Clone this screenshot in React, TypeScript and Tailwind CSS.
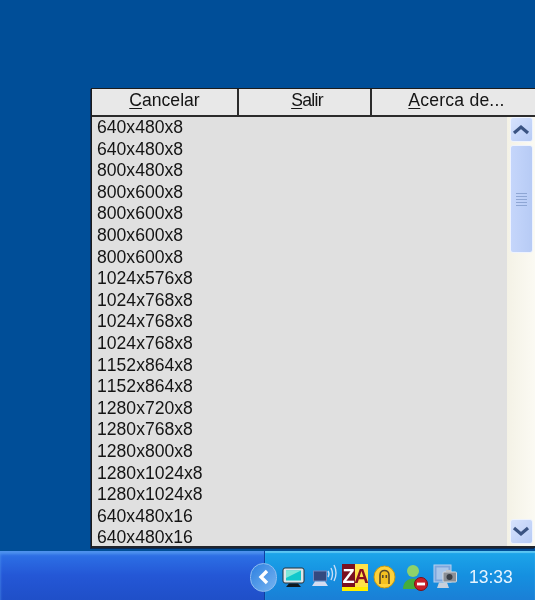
const MODES = [
  "640x480x8", "640x480x8", "800x480x8", "800x600x8", "800x600x8", "800x600x8", "800x600x8",
  "1024x576x8", "1024x768x8", "1024x768x8", "1024x768x8", "1152x864x8", "1152x864x8",
  "1280x720x8", "1280x768x8", "1280x800x8", "1280x1024x8", "1280x1024x8", "640x480x16", "640x480x16",
];

function ScrollArrow({ up }: { up?: boolean }) {
  return (
    <div className="flex h-[25px] w-[23px] items-center justify-center rounded-[3px] border border-[#eef3fe] bg-gradient-to-br from-[#d6e2fd] to-[#b7cbf5]">
      <svg width="18" height="11" viewBox="0 0 18 11">
        <path d={up ? "M2 9 L9 3 L16 9" : "M2 2 L9 8 L16 2"} fill="none" stroke="#3a5382" strokeWidth="3.2" />
      </svg>
    </div>
  );
}

function Tray() {
  return (
    <div className="flex h-full w-[271px] items-center border-l border-[#0f3f9f] bg-gradient-to-b from-[#1da6ea] via-[#1590e0] to-[#1a7fd6] pt-[3px] shadow-[inset_0_2px_1px_#5cc6f2]">
      {/* collapse arrow */}
      <div className="-ml-[15px] flex h-[29px] w-[27px] shrink-0 items-center justify-center rounded-full border border-[#8fbdf0] bg-gradient-to-br from-[#2a7fe0] to-[#76b4f0]">
        <svg width="14" height="16" viewBox="0 0 14 16">
          <path d="M10 2 L4 8 L10 14" fill="none" stroke="#ffffff" strokeWidth="3.4" />
        </svg>
      </div>
      <svg className="ml-[5px] shrink-0" width="23" height="21" viewBox="0 0 23 21">
        <rect x="1" y="1" width="21" height="15" rx="2" fill="#dfe6ea" stroke="#26323a" />
        <rect x="4" y="3.5" width="15" height="10" fill="#12c8cc" />
        <path d="M4 3.5 H19 L4 11 Z" fill="#7ee8d8" />
        <path d="M7 16.5 H16 L19 20 H4 Z" fill="#10181e" />
      </svg>
      <svg className="mb-[4px] ml-[7px] shrink-0" width="26" height="24" viewBox="0 0 26 24">
        <rect x="1.5" y="8" width="13" height="10" fill="#34497f" stroke="#6d86c0" />
        <path d="M0 23 L3 18.5 H13 L16 23 Z" fill="#d4dcf0" />
        <g fill="none" stroke="#c9def6" strokeWidth="1.4">
          <path d="M16 8 Q18 11 16 14" />
          <path d="M19 5 Q22 11 19 17" />
          <path d="M22 2 Q26 10 22 18" />
        </g>
      </svg>
      <div className="ml-[4px] flex h-[27px] w-[26px] shrink-0 bg-[#ffee00] text-[20px] leading-[24px] font-bold">
        <span className="flex h-[23px] w-[13px] justify-center bg-[#7a1020] text-white">Z</span>
        <span className="flex h-[23px] w-[13px] justify-center bg-[#ffe24a] text-[#8a1020]">A</span>
      </div>
      <svg className="ml-[5px] shrink-0" width="23" height="24" viewBox="0 0 23 24">
        <ellipse cx="11.5" cy="12" rx="10.5" ry="11" fill="#ffd23a" stroke="#c99a10" />
        <path d="M7 19 V10 C7 4 16 4 16 10 V19" fill="#f4c020" stroke="#5a4a2a" strokeWidth="1.6" />
        <rect x="9" y="10" width="1.6" height="3" fill="#5a4a2a" />
        <rect x="12.5" y="10" width="1.6" height="3" fill="#5a4a2a" />
      </svg>
      <svg className="ml-[7px] shrink-0" width="25" height="27" viewBox="0 0 25 27">
        <circle cx="10" cy="7" r="6" fill="#8fd26a" />
        <path d="M0 25 C0 11 20 11 20 25 Z" fill="#45ad3c" />
        <circle cx="18" cy="20" r="6.5" fill="#c8202a" stroke="#7a1016" />
        <rect x="14" y="18.6" width="8" height="2.8" fill="#ffffff" />
      </svg>
      <svg className="mb-[2px] ml-[5px] shrink-0" width="24" height="25" viewBox="0 0 24 25">
        <rect x="1" y="1" width="17" height="17" fill="#7ea6dc" stroke="#b9d2f0" />
        <rect x="3.5" y="3.5" width="12" height="12" fill="#a9c6ea" />
        <path d="M6 18.5 H14 L16 24 H4 Z" fill="#c8d0dc" />
        <rect x="10" y="8" width="13.5" height="10" rx="1" fill="#8a8f96" stroke="#d8dce0" />
        <circle cx="16.5" cy="13" r="3" fill="#3a3f46" />
        <rect x="13" y="6" width="5" height="2" fill="#bfc4ca" />
      </svg>
      <span className="ml-[12px] shrink-0 text-[17.5px] text-[#e6f4ff]">13:33</span>
    </div>
  );
}

export default function App() {
  return (
    <div className="flex h-[600px] w-[535px] flex-col overflow-hidden bg-[#004e98] blur-[0.4px] [font-family:'Liberation_Sans',sans-serif]">
      <div className="flex-1 pt-[88px] pb-[3px] pl-[91px]">
        <div className="flex h-[460px] w-[444px] flex-col border-t border-l border-[#1c1c1c] bg-[#e0e0e0] text-[17.6px] text-[#141414] shadow-[-1px_1px_0_#0a2a55]">
          <div className="flex h-[28px] shrink-0 border-b-2 border-[#2b2b2b] bg-[#e8e8e8] pb-[3px]">
            <div className="flex w-[145px] items-center justify-center">
              <span><span className="underline underline-offset-2">C</span>ancelar</span>
            </div>
            <div className="-mb-[3px] w-[2px] bg-[#2b2b2b]" />
            <div className="flex w-[131px] items-center justify-center pl-[5px] tracking-[-0.7px]">
              <span><span className="underline underline-offset-2">S</span>alir</span>
            </div>
            <div className="-mb-[3px] w-[2px] bg-[#2b2b2b]" />
            <div className="flex flex-1 items-center justify-center pl-[6px] tracking-[0.2px]">
              <span><span className="underline underline-offset-2">A</span>cerca de...</span>
            </div>
          </div>
          <div className="flex min-h-0 flex-1 border-b-2 border-[#20242c]">
            <ul className="flex-1 pl-[5px] [font-kerning:none]">
              {MODES.map((mode, i) => (
                <li key={i} className="h-[21.6px] leading-[21.6px]">{mode}</li>
              ))}
            </ul>
            <div className="flex w-[28px] flex-col items-center justify-between bg-gradient-to-r from-[#f4f2e6] to-[#fbfaf3] pb-[2px]">
              <div className="flex flex-col items-center gap-[3px]">
                <ScrollArrow up />
                <div className="flex h-[108px] w-[23px] flex-col items-center justify-center gap-[2px] rounded-[3px] border border-[#eef3fe] bg-gradient-to-r from-[#c5d6fb] to-[#b7cbf5]">
                  <div className="h-px w-[11px] bg-[#8ea6d4]" />
                  <div className="h-px w-[11px] bg-[#8ea6d4]" />
                  <div className="h-px w-[11px] bg-[#8ea6d4]" />
                  <div className="h-px w-[11px] bg-[#8ea6d4]" />
                  <div className="h-px w-[11px] bg-[#8ea6d4]" />
                </div>
              </div>
              <ScrollArrow />
            </div>
          </div>
        </div>
      </div>
      <div className="flex h-[49px] shrink-0 justify-end bg-gradient-to-b from-[#2f74e8] via-[#2457d6] to-[#1f4fc8] shadow-[inset_0_3px_3px_#4f93ee]">
        <Tray />
      </div>
    </div>
  );
}
